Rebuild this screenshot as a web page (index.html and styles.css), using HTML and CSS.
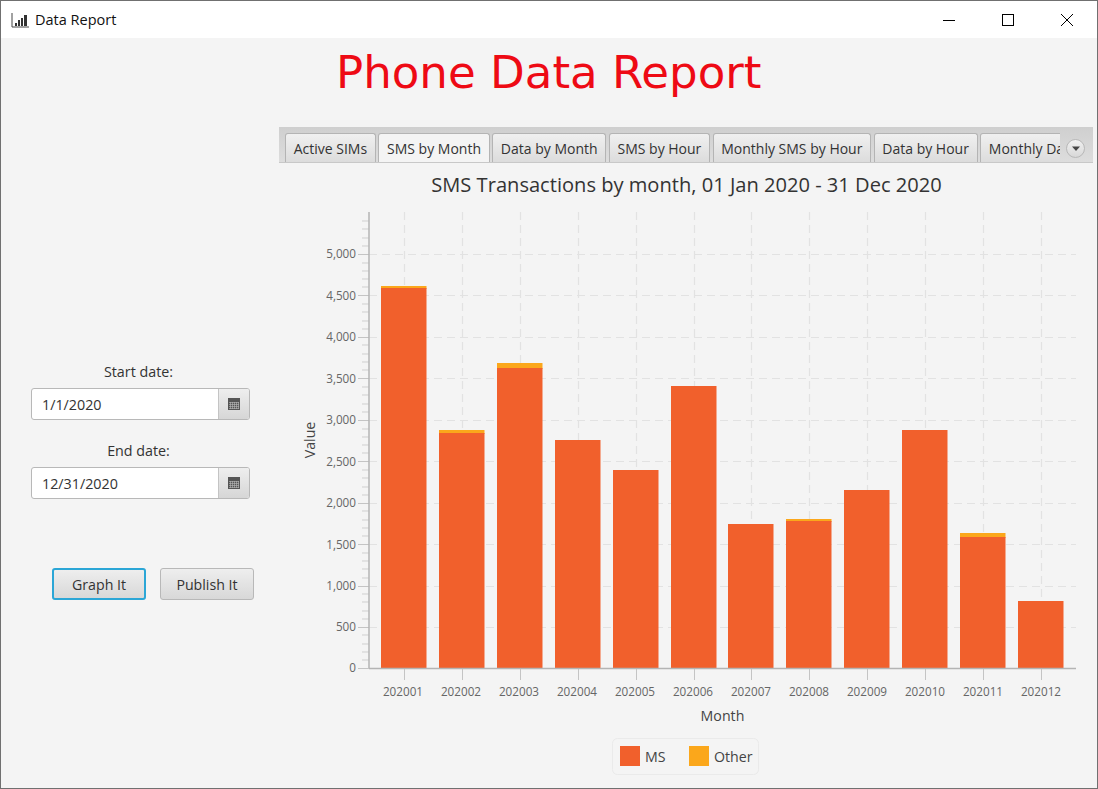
FILE: index.html
```html
<!DOCTYPE html>
<html lang="en">
<head>
    <meta charset="UTF-8">
    <title>Data Report</title>
    <link rel="stylesheet" href="styles.css">
</head>
<body>
<div class="window">
    <div class="titlebar">
        <svg class="appicon" width="18" height="16" viewBox="0 0 18 16">
            <path d="M1 1V15H18" fill="none" stroke="#444" stroke-width="1"/>
            <path d="M4 11h2v3H4zM7 8h2v6H7zM10 6h2v8h-2zM13 3h3v11h-3z" fill="#333"/>
        </svg>
        <span class="apptitle">Data Report</span>
        <div class="controls">
            <svg width="16" height="16" viewBox="0 0 16 16"><path d="M2 8.500H14" stroke="#000" fill="none"/></svg>
            <svg width="16" height="16" viewBox="0 0 16 16"><rect x="2.500" y="2.500" width="11" height="11" stroke="#000" fill="none"/></svg>
            <svg width="16" height="16" viewBox="0 0 16 16"><path d="M2 2L14 14M14 2L2 14" stroke="#000" fill="none"/></svg>
        </div>
    </div>
    <h1 class="heading">Phone Data Report</h1>
    <div class="main">
        <div class="side">
            <label class="fieldlabel">Start date:</label>
            <div class="datefield">
                <span class="datevalue">1/1/2020</span>
                <span class="calbtn">
                    <svg width="12" height="12" viewBox="0 0 12 12"><rect width="12" height="12" fill="#555"/><path d="M1 4.500H11M1 6.500H11M1 8.500H11M1 10.500H11M2.500 4V11M4.500 4V11M6.500 4V11M8.500 4V11M10.500 4V11" stroke="#bbb" stroke-width=".6"/></svg>
                </span>
            </div>
            <label class="fieldlabel second">End date:</label>
            <div class="datefield">
                <span class="datevalue">12/31/2020</span>
                <span class="calbtn">
                    <svg width="12" height="12" viewBox="0 0 12 12"><rect width="12" height="12" fill="#555"/><path d="M1 4.500H11M1 6.500H11M1 8.500H11M1 10.500H11M2.500 4V11M4.500 4V11M6.500 4V11M8.500 4V11M10.500 4V11" stroke="#bbb" stroke-width=".6"/></svg>
                </span>
            </div>
            <div class="buttons">
                <button class="btn focused">Graph It</button>
                <button class="btn">Publish It</button>
            </div>
        </div>
        <div class="tabpane">
            <div class="tabheader">
                <div class="tabstrip">
                    <div class="tab">Active SIMs</div>
                    <div class="tab selected">SMS by Month</div>
                    <div class="tab">Data by Month</div>
                    <div class="tab">SMS by Hour</div>
                    <div class="tab">Monthly SMS by Hour</div>
                    <div class="tab">Data by Hour</div>
                    <div class="tab">Monthly Data by Hour</div>
                </div>
                <span class="tabmenu"><svg width="10" height="6" viewBox="0 0 10 6"><path d="M1 0.500H9L5 5Z" fill="#444"/></svg></span>
            </div>
            <svg class="chart" width="818" height="625" viewBox="279 163 818 625">
                <text class="charttitle" x="686.500" y="192" text-anchor="middle">SMS Transactions by month, 01 Jan 2020 - 31 Dec 2020</text>

                <!-- grid -->
                <path class="grid" d="M369 627.500H1076M369 586.500H1076M369 544.500H1076M369 503.500H1076M369 461.500H1076M369 420.500H1076M369 378.500H1076M369 337.500H1076M369 295.500H1076M369 254.500H1076"/>
                <path class="grid" d="M404.500 212V668M462.500 212V668M520.500 212V668M578.500 212V668M636.500 212V668M694.500 212V668M751.500 212V668M809.500 212V668M867.500 212V668M925.500 212V668M983.500 212V668M1041.500 212V668"/>

                <!-- y axis -->
                <path class="minor" d="M362 660H369M362 652H369M362 644H369M362 635H369M362 619H369M362 611H369M362 602H369M362 594H369M362 578H369M362 569H369M362 561H369M362 553H369M362 536H369M362 528H369M362 520H369M362 511H369M362 495H369M362 487H369M362 478H369M362 470H369M362 453H369M362 445H369M362 437H369M362 429H369M362 412H369M362 404H369M362 395H369M362 387H369M362 370H369M362 362H369M362 354H369M362 345H369M362 329H369M362 321H369M362 312H369M362 304H369M362 287H369M362 279H369M362 271H369M362 263H369M362 246H369M362 238H369M362 229H369M362 221H369"/>
                <path class="major" d="M358 668.500H369M358 627.500H369M358 586.500H369M358 544.500H369M358 503.500H369M358 461.500H369M358 420.500H369M358 378.500H369M358 337.500H369M358 295.500H369M358 254.500H369"/>
                <path class="axis" d="M369 212V668"/>
                <g class="ticklabel" text-anchor="end">
                    <text x="356" y="672">0</text>
                    <text x="356" y="631">500</text>
                    <text x="356" y="590">1,000</text>
                    <text x="356" y="549">1,500</text>
                    <text x="356" y="507">2,000</text>
                    <text x="356" y="466">2,500</text>
                    <text x="356" y="424">3,000</text>
                    <text x="356" y="383">3,500</text>
                    <text x="356" y="341">4,000</text>
                    <text x="356" y="300">4,500</text>
                    <text x="356" y="258">5,000</text>
                </g>
                <text class="axislabel" transform="translate(315 440) rotate(-90)" text-anchor="middle">Value</text>

                <!-- other series -->
                <g class="other">
                    <rect x="381" y="286" width="45.500" height="3"/>
                    <rect x="439" y="430" width="45.500" height="4"/>
                    <rect x="497" y="363" width="45.500" height="6"/>
                    <rect x="786" y="519" width="45.500" height="3"/>
                    <rect x="960" y="533" width="45.500" height="5"/>
                </g>
                <!-- MS series -->
                <g class="ms">
                    <rect x="381" y="288" width="45.500" height="380"/>
                    <rect x="439" y="433" width="45.500" height="235"/>
                    <rect x="497" y="368" width="45.500" height="300"/>
                    <rect x="555" y="440" width="45.500" height="228"/>
                    <rect x="613" y="470" width="45.500" height="198"/>
                    <rect x="671" y="386" width="45.500" height="282"/>
                    <rect x="728" y="524" width="45.500" height="144"/>
                    <rect x="786" y="521" width="45.500" height="147"/>
                    <rect x="844" y="490" width="45.500" height="178"/>
                    <rect x="902" y="430" width="45.500" height="238"/>
                    <rect x="960" y="537" width="45.500" height="131"/>
                    <rect x="1018" y="601" width="45.500" height="67"/>
                </g>

                <!-- x axis -->
                <path class="axis" d="M369 668.500H1076"/>
                <path class="major" d="M404.500 669V680M462.500 669V680M520.500 669V680M578.500 669V680M636.500 669V680M694.500 669V680M751.500 669V680M809.500 669V680M867.500 669V680M925.500 669V680M983.500 669V680M1041.500 669V680"/>
                <g class="ticklabel" text-anchor="middle">
                    <text x="403" y="696">202001</text>
                    <text x="461" y="696">202002</text>
                    <text x="519" y="696">202003</text>
                    <text x="577" y="696">202004</text>
                    <text x="635" y="696">202005</text>
                    <text x="693" y="696">202006</text>
                    <text x="751" y="696">202007</text>
                    <text x="809" y="696">202008</text>
                    <text x="867" y="696">202009</text>
                    <text x="925" y="696">202010</text>
                    <text x="983" y="696">202011</text>
                    <text x="1041" y="696">202012</text>
                </g>
                <text class="axislabel" x="722.500" y="721" text-anchor="middle">Month</text>

                <!-- legend -->
                <rect class="legendbox" x="612.500" y="738.500" width="146" height="36" rx="5"/>
                <rect class="ms" x="620" y="746" width="20" height="20"/>
                <text class="legendtext" x="645" y="762">MS</text>
                <rect class="other" x="689" y="746" width="20" height="20"/>
                <text class="legendtext" x="714" y="762">Other</text>
            </svg>
        </div>
    </div>
</div>
</body>
</html>
```

FILE: styles.css
```css
html, body { margin: 0; padding: 0; background: #f4f4f4; }
body { font-family: "Open Sans", "Liberation Sans", sans-serif; color: #333; }

.window { width: 1098px; height: 789px; box-sizing: border-box; border: 1px solid #707070; display: flex; flex-direction: column; overflow: hidden; }

.titlebar { height: 37px; flex: none; background: #fff; display: flex; align-items: center; padding-left: 10px; }
.appicon { margin-right: 6px; }
.apptitle { font-size: 14.500px; color: #111; }
.controls { margin-left: auto; display: flex; gap: 43px; padding-right: 22px; }

.heading { height: 89px; flex: none; margin: 0; padding-left: 335px; box-sizing: border-box; font-family: "DejaVu Sans", sans-serif; font-weight: normal; font-size: 45.100px; line-height: 70px; color: #ee0a14; }

.main { flex: 1; display: flex; }

.side { width: 278px; flex: none; box-sizing: border-box; padding: 235px 0 0 30px; display: flex; flex-direction: column; }
.fieldlabel { width: 215px; height: 20px; line-height: 20px; text-align: center; font-size: 14.300px; color: #333; }
.fieldlabel.second { margin-top: 21px; }
.datefield { width: 219px; height: 32px; margin-top: 6px; box-sizing: border-box; border: 1px solid #b8b8b8; border-radius: 3px; background: #fff; display: flex; align-items: center; }
.datevalue { flex: 1; padding-left: 10px; font-size: 14.300px; color: #333; }
.calbtn { width: 30px; height: 30px; display: flex; align-items: center; justify-content: center; border-left: 1px solid #c4c4c4; background: linear-gradient(#eeeeee, #d6d6d6); border-radius: 0 2px 2px 0; }

.buttons { display: flex; gap: 14px; margin: 69px 0 0 21px; }
.btn { width: 94px; height: 32px; padding: 0; box-sizing: border-box; border: 1px solid #b8b8b8; border-radius: 3px; background: linear-gradient(#eeeeee, #d8d8d8); font-family: inherit; font-size: 14.200px; color: #333; }
.btn.focused { border: 2px solid #2ba6d6; }

.tabpane { flex: 1; display: flex; flex-direction: column; }
.tabheader { height: 36px; flex: none; margin-right: 4px; background: linear-gradient(#cfcfcf, #dddddd); border-bottom: 1px solid #c8c8c8; box-sizing: border-box; display: flex; position: relative; }
.tabstrip { width: 781px; height: 35px; box-sizing: border-box; padding: 6px 0 0 6px; display: flex; gap: 2.500px; overflow: hidden; }
.tab { flex: none; height: 29px; box-sizing: border-box; padding: 0 7.700px; line-height: 29px; font-size: 14px; white-space: nowrap; color: #333; border: 1px solid #b4b4b4; border-bottom: none; border-radius: 3px 3px 0 0; background: linear-gradient(#f0f0f0, #dcdcdc); }
.tab.selected { background: #f4f4f4; height: 30px; }
.tabmenu { width: 19px; height: 19px; margin: 12px 0 0 6px; border: 1px solid #b8b8b8; border-radius: 50%; box-sizing: border-box; background: linear-gradient(#f0f0f0, #d8d8d8); display: flex; align-items: center; justify-content: center; }

.chart { display: block; font-family: "Open Sans", "Liberation Sans", sans-serif; }
.charttitle { font-size: 20.100px; fill: #333; }
.grid { fill: none; stroke: #e2e2e2; stroke-width: 1.200; stroke-dasharray: 8 5; }
.minor { fill: none; stroke: #cfcfcf; stroke-width: 1; }
.major { fill: none; stroke: #c4c4c4; stroke-width: 1; }
.axis { fill: none; stroke: #b4b4b4; stroke-width: 1.500; }
.ticklabel { font-size: 11.700px; fill: #666; }
.axislabel { font-size: 14.200px; fill: #444; }
.ms { fill: #f1602c; }
.other { fill: #fba71b; }
.legendbox { fill: #f4f4f4; stroke: #eaeaea; }
.legendtext { font-size: 14.200px; fill: #444; }
```
